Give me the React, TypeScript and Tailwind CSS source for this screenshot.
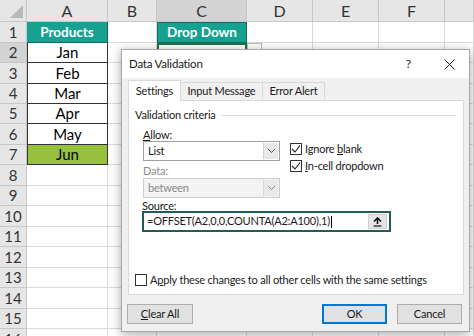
import React from "react";

const COLS = ["", "A", "B", "C", "D", "E", "F", ""];
const ROW_H = [21, 20, 21, 20, 20, 21, 20, 21, 20, 21, 20, 21, 20, 21, 20, 21];
const MONTHS = ["Jan", "Feb", "Mar", "Apr", "May", "Jun"];

function Check({ checked }: { checked: boolean }) {
  return (
    <span className="inline-flex w-[12px] h-[12px] border border-[#333] bg-white items-center justify-center shrink-0">
      {checked && (
        <svg width="10" height="10" viewBox="0 0 10 10">
          <path d="M1 5 L4 8 L9 1.5" fill="none" stroke="#222" strokeWidth="1.1" />
        </svg>
      )}
    </span>
  );
}

function Chevron({ color = "#555" }: { color?: string }) {
  return (
    <svg width="9" height="6" viewBox="0 0 9 6">
      <path d="M1 1 L4.5 4.5 L8 1" fill="none" stroke={color} strokeWidth="1" />
    </svg>
  );
}

function Sheet() {
  return (
    <div className="grid grid-cols-[27px_81px_49px_90px_66px_66px_66px_29px] grid-rows-[22px_21px_20px_21px_20px_20px_21px_20px_21px_20px_21px_20px_21px_20px_21px_20px_21px] font-['Lato',sans-serif]">
      {COLS.map((c, i) => (
        <div
          key={"h" + i}
          className={`relative flex items-center justify-center border-r border-b border-[#c8c8c8] text-[16px] text-[#333] ${
            c === "C" ? "bg-[#d3d3d3]" : "bg-[#e6e6e6]"
          }`}
        >
          {i === 0 ? (
            <svg className="absolute right-[3px] bottom-[3px]" width="13" height="13" viewBox="0 0 13 13">
              <path d="M13 0 L13 13 L0 13 Z" fill="#b8b8b8" />
            </svg>
          ) : (
            c
          )}
        </div>
      ))}
      {ROW_H.map((_, r) => {
        const row = r + 1;
        return COLS.map((c, i) => {
          if (i === 0) {
            return (
              <div
                key={`${row}-${i}`}
                className={`flex items-center justify-center border-r border-b border-[#c8c8c8] text-[15px] text-[#333] ${
                  row === 2 ? "bg-[#d3d3d3]" : "bg-[#e6e6e6]"
                }`}
              >
                {row}
              </div>
            );
          }
          if (c === "A" && row === 1) {
            return (
              <div
                key={`${row}-${i}`}
                className="flex items-center justify-center bg-[#17a191] border-r border-b border-[#0d6f63] text-white font-bold text-[13.5px]"
              >
                Products
              </div>
            );
          }
          if (c === "A" && row >= 2 && row <= 7) {
            return (
              <div
                key={`${row}-${i}`}
                className={`flex items-center justify-center border-r border-b border-l border-[#333] text-black text-[15px] ${
                  row === 7 ? "bg-[#97c03d]" : "bg-white"
                }`}
              >
                {MONTHS[row - 2]}
              </div>
            );
          }
          if (c === "C" && row === 1) {
            return (
              <div
                key={`${row}-${i}`}
                className="flex items-center justify-center bg-[#17a191] border border-[#0d6f63] text-white font-bold text-[13.5px]"
              >
                Drop Down
              </div>
            );
          }
          if (c === "C" && row === 2) {
            return (
              <div key={`${row}-${i}`} className="relative border-2 border-[#217346] bg-white">
                <div className="absolute left-[88px] top-[-2px] w-[15px] h-[18px] border border-[#bdbdbd] bg-white" />
              </div>
            );
          }
          return <div key={`${row}-${i}`} className="border-r border-b border-[#dadada] bg-white" />;
        });
      })}
    </div>
  );
}

function Dialog() {
  return (
    <div className="absolute left-[121px] top-[49px] w-[349px] h-[283px] border border-[#a8a8a8] bg-[#f0f0f0] shadow-[0_2px_10px_rgba(0,0,0,0.35)] flex flex-col font-['Lato',sans-serif] text-[11px] tracking-[-0.2px] text-[#1a1a1a]">
      <div className="h-[28px] bg-white flex items-center pl-[7px] pr-[14px] shrink-0">
        <span className="text-[11.5px]">Data Validation</span>
        <span className="ml-auto mr-[33px] text-[12px]">?</span>
        <svg width="11" height="11" viewBox="0 0 11 11">
          <path d="M0.5 0.5 L10.5 10.5 M10.5 0.5 L0.5 10.5" stroke="#222" strokeWidth="1" />
        </svg>
      </div>
      <div className="flex flex-col pl-[6px] pr-[5px] pt-[3px] flex-1">
        <div className="flex items-end h-[19px]">
          <div className="w-[53px] h-[21px] bg-white border border-b-0 border-[#d9d9d9] flex items-center justify-center relative z-10 -mb-px">
            Settings
          </div>
          <div className="w-[82px] h-[18px] border border-b-0 border-l-0 border-[#d9d9d9] flex items-center justify-center">
            Input Message
          </div>
          <div className="w-[62px] h-[18px] border border-b-0 border-l-0 border-[#d9d9d9] flex items-center justify-center">
            Error Alert
          </div>
        </div>
        <div className="h-[195px] bg-white border border-[#d9d9d9] flex flex-col pl-[6px] pr-[7px] pt-[5px]">
          <div className="flex items-center h-[18px]">
            <span>Validation criteria</span>
            <div className="flex-1 h-px bg-[#dcdcdc] ml-[6px]" />
          </div>
          <div className="pl-[8px] flex">
            <div className="flex flex-col w-[137px]">
              <div className="h-[17px] flex items-end pb-[1px] leading-none">
                <span>
                  <span className="underline">A</span>llow:
                </span>
              </div>
              <div className="h-[20px] border border-[#a0a0a0] bg-white flex items-center pl-[4px]">
                <span className="flex-1">List</span>
                <div className="w-[15px] h-[16px] mr-[1px] bg-[#e9e9e9] border-l border-[#d0d0d0] flex items-center justify-center">
                  <Chevron />
                </div>
              </div>
              <div className="h-[16px] flex items-end pb-[1px] leading-none text-[#8c8c8c]">Data:</div>
              <div className="h-[20px] border border-[#cccccc] bg-[#f3f3f3] flex items-center pl-[4px] mt-[1px] text-[#8a8a8a]">
                <span className="flex-1">between</span>
                <div className="w-[15px] h-[16px] mr-[1px] bg-[#e9e9e9] border-l border-[#d6d6d6] flex items-center justify-center">
                  <Chevron color="#8a8a8a" />
                </div>
              </div>
            </div>
            <div className="flex flex-col ml-[10px] pt-[19px] gap-[5px]">
              <div className="flex items-center gap-[3px] h-[12px]">
                <Check checked />
                <span>
                  Ignore <span className="underline">b</span>lank
                </span>
              </div>
              <div className="flex items-center gap-[3px] h-[12px]">
                <Check checked />
                <span>
                  <span className="underline">I</span>n-cell dropdown
                </span>
              </div>
            </div>
          </div>
          <div className="pl-[7px] h-[13px] flex items-end leading-none">
            <span>
              <span className="underline">S</span>ource:
            </span>
          </div>
          <div className="ml-[7px] w-[249px] h-[21px] border-2 border-[#245b55] bg-white flex items-center pl-[3px] pr-[2px]">
            <span className="flex-1 whitespace-nowrap">
              =OFFSET(A2,0,0,COUNTA(A2:A100),1)
              <span className="inline-block w-px h-[12px] bg-black align-middle ml-[1px]" />
            </span>
            <div className="w-[19px] h-[15px] bg-[#e5e5e5] border border-[#cfcfcf] flex items-center justify-center">
              <svg width="9" height="10" viewBox="0 0 9 10">
                <path d="M4.5 1 L4.5 7" stroke="#111" strokeWidth="1.6" />
                <path d="M1 4.5 L4.5 1 L8 4.5" fill="none" stroke="#111" strokeWidth="1.6" />
                <path d="M0.5 9 L8.5 9" stroke="#111" strokeWidth="1.2" />
              </svg>
            </div>
          </div>
          <div className="mt-auto mb-[6px] flex items-center gap-[3px] whitespace-nowrap">
            <Check checked={false} />
            <span>
              A<span className="underline">p</span>ply these changes to all other cells with the same settings
            </span>
          </div>
        </div>
        <div className="flex items-center mt-[9px] pr-[2px]">
          <div className="w-[66px] h-[20px] bg-[#e1e1e1] border border-[#adadad] flex items-center justify-center -ml-[1px]">
            <span>
              <span className="underline">C</span>lear All
            </span>
          </div>
          <div className="ml-auto w-[65px] h-[20px] bg-[#e1e1e1] border-2 border-[#0078d7] flex items-center justify-center">
            OK
          </div>
          <div className="ml-[10px] w-[65px] h-[20px] bg-[#e1e1e1] border border-[#adadad] flex items-center justify-center">
            Cancel
          </div>
        </div>
      </div>
    </div>
  );
}

export default function App() {
  return (
    <div className="relative w-[474px] h-[336px] overflow-hidden bg-white">
      <Sheet />
      <Dialog />
    </div>
  );
}
